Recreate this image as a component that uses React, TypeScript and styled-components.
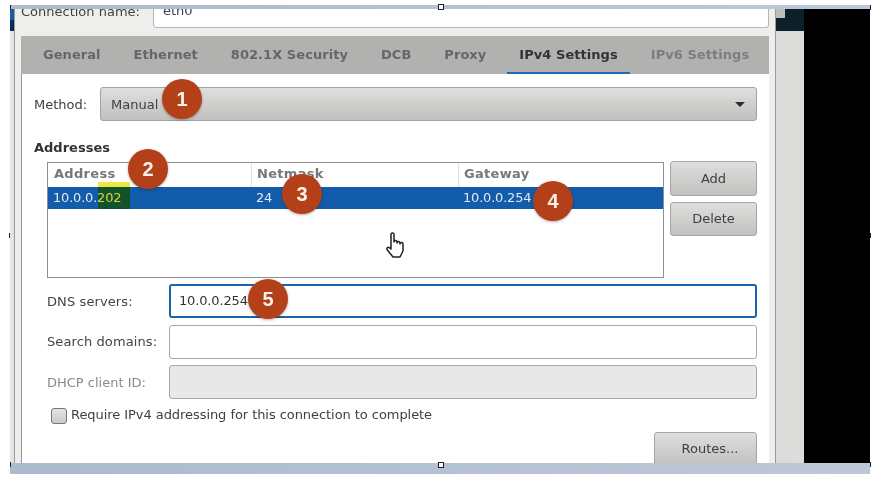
import styled, {createGlobalStyle} from "styled-components";

const GlobalStyle = createGlobalStyle`
    html, body {
        margin: 0;
        padding: 0;
        background: #fff;
    }
    body {
        font-family: "DejaVu Sans", "Liberation Sans", sans-serif;
        font-size: 13px;
        color: #3f3f3f;
    }
`;

const Page = styled.div`
    position: relative;
    width: 885px;
    height: 485px;
    box-sizing: border-box;
    padding: 5px 15px 0 10px;
    overflow: hidden;
    background: #fff;
    filter: blur(0.35px);
`;

const WindowBar = styled.div<{$h: number}>`
    height: ${p => p.$h}px;
    background: linear-gradient(90deg, #adbacd, #bcc8da);
`;

const Workspace = styled.div`
    display: flex;
    height: 454px;
    overflow: hidden;
`;

const LeftEdge = styled.div`
    width: 5px;
    flex: none;
    background: linear-gradient(#1b5aa6 0, #1b5aa6 11px, #0d2a50 11px, #0d2a50 22px, #e4e4e2 22px);
    border-right: 1px solid #9a9a9a;
    box-sizing: border-box;
`;

const Dialog = styled.div`
    width: 761px;
    flex: none;
    box-sizing: border-box;
    padding: 0 6px 0 6px;
    background: #eeeeec;
    border-right: 1px solid #9b9b9b;
`;

const NameRow = styled.div`
    display: flex;
    align-items: center;
    height: 19px;
    margin-bottom: 8px;
`;

const NameLabel = styled.span`
    width: 132px;
    flex: none;
    margin-top: -14px;
`;

const NameInput = styled.div`
    flex: 1;
    height: 34px;
    margin-top: -15px;
    padding: 0 9px;
    line-height: 32px;
    box-sizing: border-box;
    background: #fff;
    border: 1px solid #b5b5b5;
    border-radius: 3px;
`;

const Tabs = styled.div`
    display: flex;
    gap: 9px;
    height: 38px;
    padding-left: 10px;
    background: #b1b1af;
`;

const Tab = styled.div<{$active?: boolean; $dim?: boolean}>`
    display: flex;
    align-items: center;
    padding: 0 12px;
    box-sizing: border-box;
    white-space: nowrap;
    font-weight: 700;
    font-size: 13px;
    letter-spacing: 0.05px;
    color: ${p => (p.$active ? "#333" : p.$dim ? "#7d7d7d" : "#666")};
    border-bottom: 2px solid ${p => (p.$active ? "#1f69b8" : "transparent")};
`;

const Panel = styled.div`
    height: 389px;
    padding: 13px 12px 0 12px;
    background: #fff;
    border-left: 1px solid #999;
    box-sizing: border-box;
`;

const MethodRow = styled.div`
    display: flex;
    align-items: center;
    height: 34px;
`;

const MethodLabel = styled.span`
    width: 66px;
    flex: none;
`;

const Combo = styled.div`
    flex: 1;
    display: flex;
    align-items: center;
    justify-content: space-between;
    height: 34px;
    padding: 0 11px 0 10px;
    box-sizing: border-box;
    background: linear-gradient(#dfdfdd, #c0c0be);
    border: 1px solid #a2a2a2;
    border-radius: 3px;
`;

const ComboArrow = styled.span`
    width: 0;
    height: 0;
    border-left: 5px solid transparent;
    border-right: 5px solid transparent;
    border-top: 5px solid #2b2b2b;
`;

const SectionTitle = styled.div`
    margin-top: 18px;
    height: 16px;
    line-height: 18px;
    font-weight: 700;
    color: #333;
`;

const AddressRow = styled.div`
    display: flex;
    gap: 6px;
    margin: 6px 0 0 13px;
`;

const AddressTable = styled.div`
    width: 618px;
    height: 116px;
    margin-top: 1px;
    box-sizing: border-box;
    border: 1px solid #8f8f8f;
    background: #fff;
`;

const HeaderRow = styled.div`
    display: grid;
    grid-template-columns: 203px 207px 1fr;
    height: 24px;
`;

const HeaderCell = styled.div`
    padding-left: 6px;
    line-height: 22px;
    font-weight: 700;
    color: #777;
    letter-spacing: 0.3px;
    & + & {
        padding-left: 5px;
        border-left: 1px solid #e2e2e2;
    }
`;

const SelectedRow = styled.div`
    display: grid;
    grid-template-columns: 203px 207px 1fr;
    height: 22px;
    background: #125cab;
    color: #dfe9f4;
    line-height: 22px;
    letter-spacing: -0.2px;
`;

const SelectedCell = styled.div`
    padding-left: 5px;
`;

const ButtonColumn = styled.div`
    display: flex;
    flex-direction: column;
    gap: 6px;
`;

const Button = styled.div<{$w: number; $h: number; $pad?: number}>`
    width: ${p => p.$w}px;
    height: ${p => p.$h}px;
    flex: none;
    display: flex;
    align-items: center;
    justify-content: center;
    box-sizing: border-box;
    padding: 0 0 1px ${p => p.$pad ?? 0}px;
    background: linear-gradient(#dededc, #c1c1bf);
    border: 1px solid #a6a6a6;
    border-radius: 3px;
`;

const FormGrid = styled.div`
    display: grid;
    grid-template-columns: 122px 1fr;
    grid-auto-rows: 34px;
    row-gap: 6.5px;
    align-items: center;
    margin: 6px 0 0 13px;
`;

const FormLabel = styled.span<{$disabled?: boolean}>`
    color: ${p => (p.$disabled ? "#8a8a8a" : "#444")};
    letter-spacing: ${p => (p.$disabled ? "0" : "0.1px")};
`;

const Field = styled.div<{$focus?: boolean; $disabled?: boolean}>`
    height: 34px;
    padding: 0 8px;
    line-height: 29px;
    box-sizing: border-box;
    background: ${p => (p.$disabled ? "#e8e8e8" : "#fff")};
    border: ${p => (p.$focus ? "2px solid #1d62ad" : "1px solid #a8a8a8")};
    border-radius: 3px;
    color: #333;
    letter-spacing: -0.15px;
`;

const CheckRow = styled.div`
    display: flex;
    align-items: center;
    gap: 4px;
    height: 16px;
    margin: 9px 0 0 17px;
    letter-spacing: -0.06px;
`;

const CheckText = styled.span`
    line-height: 14px;
    margin-bottom: 2px;
`;

const CheckBox = styled.span`
    width: 16px;
    height: 16px;
    flex: none;
    box-sizing: border-box;
    background: linear-gradient(#e4e4e4, #c9c9c9);
    border: 1px solid #777;
    border-radius: 3px;
`;

const RoutesRow = styled.div`
    display: flex;
    justify-content: flex-end;
    margin-top: 8px;
`;

const Side = styled.div`
    width: 28px;
    flex: none;
    display: flex;
    flex-direction: column;
`;

const SideTop = styled.div`
    height: 22px;
    background: #0b2029;
`;

const SideNub = styled.div`
    width: 9px;
    height: 9px;
    background: #bdbdbb;
`;

const SideBody = styled.div`
    flex: 1;
    background: #dcdcda;
`;

const BlackArea = styled.div`
    flex: 1;
    background: #000;
`;

const Badge = styled.div<{$x: number; $y: number}>`
    position: absolute;
    left: ${p => p.$x - 20}px;
    top: ${p => p.$y - 20}px;
    width: 40px;
    height: 40px;
    display: flex;
    align-items: center;
    justify-content: center;
    border-radius: 50%;
    background: #b4401a;
    color: #fbf3ec;
    font-family: "Liberation Sans", Arial, sans-serif;
    font-weight: 700;
    font-size: 20px;
    box-shadow: 0 1px 3px rgba(0, 0, 0, 0.3);
`;

const Highlight = styled.div`
    position: absolute;
    left: 98px;
    top: 182px;
    width: 32px;
    height: 27px;
    background: #f2e640;
    mix-blend-mode: multiply;
`;

const Handle = styled.div<{$x: number; $y: number}>`
    position: absolute;
    left: ${p => p.$x}px;
    top: ${p => p.$y}px;
    width: 6px;
    height: 6px;
    box-sizing: border-box;
    background: #fff;
    border: 1px solid #222;
`;

const Tick = styled.div<{$x: number; $y: number}>`
    position: absolute;
    left: ${p => p.$x}px;
    top: ${p => p.$y}px;
    width: 1px;
    height: 5px;
    background: #222;
`;

const Cursor = styled.svg`
    position: absolute;
    left: 386px;
    top: 232px;
`;

const tabs = ["General", "Ethernet", "802.1X Security", "DCB", "Proxy"];

const badges = [
    {n: 1, x: 182, y: 99},
    {n: 2, x: 148, y: 169},
    {n: 3, x: 302, y: 194},
    {n: 4, x: 553, y: 201},
    {n: 5, x: 268, y: 299},
];

const handles = [
    {x: 438, y: 4},
    {x: 438, y: 462},
];

const ticks = [
    {x: 10, y: 5},
    {x: 870, y: 5},
    {x: 9, y: 233},
    {x: 870, y: 233},
    {x: 10, y: 462},
    {x: 870, y: 462},
];

export default function App() {
    return (
        <>
            <GlobalStyle/>
            <Page>
                <WindowBar $h={4}/>
                <Workspace>
                    <LeftEdge/>
                    <Dialog>
                        <NameRow>
                            <NameLabel>Connection name:</NameLabel>
                            <NameInput>eth0</NameInput>
                        </NameRow>
                        <Tabs>
                            {tabs.map(t => <Tab key={t}>{t}</Tab>)}
                            <Tab $active>IPv4 Settings</Tab>
                            <Tab $dim>IPv6 Settings</Tab>
                        </Tabs>
                        <Panel>
                            <MethodRow>
                                <MethodLabel>Method:</MethodLabel>
                                <Combo>
                                    <span>Manual</span>
                                    <ComboArrow/>
                                </Combo>
                            </MethodRow>
                            <SectionTitle>Addresses</SectionTitle>
                            <AddressRow>
                                <AddressTable>
                                    <HeaderRow>
                                        <HeaderCell>Address</HeaderCell>
                                        <HeaderCell>Netmask</HeaderCell>
                                        <HeaderCell>Gateway</HeaderCell>
                                    </HeaderRow>
                                    <SelectedRow>
                                        <SelectedCell>10.0.0.202</SelectedCell>
                                        <SelectedCell>24</SelectedCell>
                                        <SelectedCell>10.0.0.254</SelectedCell>
                                    </SelectedRow>
                                </AddressTable>
                                <ButtonColumn>
                                    <Button $w={87} $h={35}>Add</Button>
                                    <Button $w={87} $h={34}>Delete</Button>
                                </ButtonColumn>
                            </AddressRow>
                            <FormGrid>
                                <FormLabel>DNS servers:</FormLabel>
                                <Field $focus>10.0.0.254</Field>
                                <FormLabel>Search domains:</FormLabel>
                                <Field/>
                                <FormLabel $disabled>DHCP client ID:</FormLabel>
                                <Field $disabled/>
                            </FormGrid>
                            <CheckRow>
                                <CheckBox/>
                                <CheckText>Require IPv4 addressing for this connection to complete</CheckText>
                            </CheckRow>
                            <RoutesRow>
                                <Button $w={103} $h={34} $pad={9}>Routes...</Button>
                            </RoutesRow>
                        </Panel>
                    </Dialog>
                    <Side>
                        <SideTop><SideNub/></SideTop>
                        <SideBody/>
                    </Side>
                    <BlackArea/>
                </Workspace>
                <WindowBar $h={11}/>
                <Highlight/>
                {handles.map(h => <Handle key={`${h.x}-${h.y}`} $x={h.x} $y={h.y}/>)}
                {ticks.map(t => <Tick key={`${t.x}-${t.y}`} $x={t.x} $y={t.y}/>)}
                {badges.map(b => <Badge key={b.n} $x={b.x} $y={b.y}>{b.n}</Badge>)}
                <Cursor width="18" height="26" viewBox="0 0 18 26">
                    <path
                        d="M5 13V2.5a1.5 1.5 0 0 1 3 0V10a1.5 1.5 0 0 1 3 0v1a1.5 1.5 0 0 1 3 0v1a1.5 1.5 0 0 1 3 0v7l-3 6H7L1 17.5a1.5 1.5 0 0 1 2-2L5 17Z"
                        fill="#fff"
                        stroke="#222"
                        strokeWidth="1.5"
                        strokeLinejoin="round"
                    />
                </Cursor>
            </Page>
        </>
    );
}
